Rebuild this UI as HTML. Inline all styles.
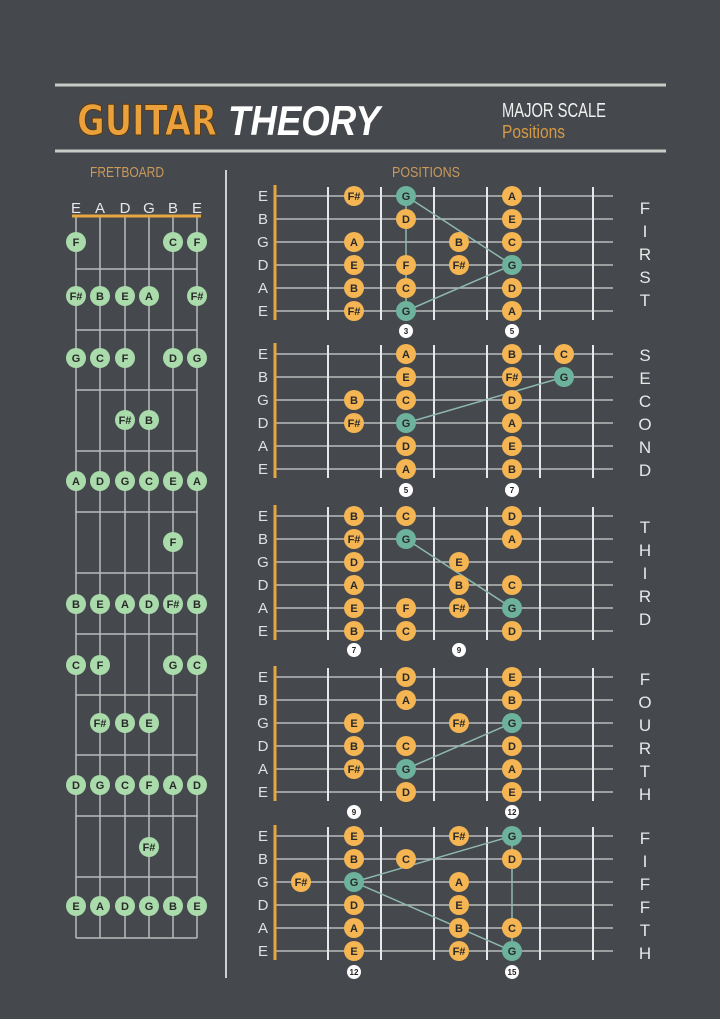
<!DOCTYPE html>
<html><head><meta charset="utf-8"><style>
html,body{margin:0;padding:0;background:#45484d;}
svg{display:block}
text{font-family:"Liberation Sans",sans-serif}
.o{fill:#f4b552}
.g{fill:#6db29c}
.lg{fill:#a9dbab}
.n{font-size:11px;font-weight:bold;fill:#2a2a2a;text-anchor:middle}
.s{stroke:#b9bcbc;stroke-width:1.5}
.f{stroke:#e8e8e8;stroke-width:2}
.lbl{font-size:15px;fill:#e0e0e0;text-anchor:middle}
.w{font-size:15px;fill:#e8e8e8;text-anchor:middle}
.rw{font-size:17px;fill:#e8e8e8;text-anchor:middle}
.ln{stroke:#8fb8ae;stroke-width:1.5}
.fn{fill:#fff}
.fnt{font-size:8px;font-weight:bold;fill:#222;text-anchor:middle}
</style></head><body>
<svg width="720" height="1019" viewBox="0 0 720 1019" xmlns="http://www.w3.org/2000/svg">
<defs>
<g id="grid">
  <text class="lbl" x="263" y="201">E</text>
  <text class="lbl" x="263" y="224">B</text>
  <text class="lbl" x="263" y="247">G</text>
  <text class="lbl" x="263" y="270">D</text>
  <text class="lbl" x="263" y="293">A</text>
  <text class="lbl" x="263" y="316">E</text>
  <line class="s" x1="275" y1="196" x2="613" y2="196"/>
  <line class="s" x1="275" y1="219" x2="613" y2="219"/>
  <line class="s" x1="275" y1="242" x2="613" y2="242"/>
  <line class="s" x1="275" y1="265" x2="613" y2="265"/>
  <line class="s" x1="275" y1="288" x2="613" y2="288"/>
  <line class="s" x1="275" y1="311" x2="613" y2="311"/>
  <line class="f" x1="328" y1="187" x2="328" y2="320"/>
  <line class="f" x1="381" y1="187" x2="381" y2="320"/>
  <line class="f" x1="434" y1="187" x2="434" y2="320"/>
  <line class="f" x1="487" y1="187" x2="487" y2="320"/>
  <line class="f" x1="540" y1="187" x2="540" y2="320"/>
  <line class="f" x1="593" y1="187" x2="593" y2="320"/>
  <line x1="275" y1="185" x2="275" y2="320" stroke="#e8a73e" stroke-width="3"/>
</g>
</defs>

<line x1="55" y1="85" x2="666" y2="85" stroke="#c8ccc6" stroke-width="3"/>
<line x1="55" y1="151" x2="666" y2="151" stroke="#c8ccc6" stroke-width="3"/>
<text x="77" y="135" font-size="42" font-weight="bold" fill="#eba13b" stroke="#5a3a10" stroke-width="1" style="font-family:'DejaVu Sans Condensed','Liberation Sans Narrow',sans-serif" textLength="140" lengthAdjust="spacingAndGlyphs">GUITAR</text>
<text x="228" y="135" font-size="42" font-weight="bold" font-style="italic" fill="#ffffff" textLength="152" lengthAdjust="spacingAndGlyphs">THEORY</text>
<text x="502" y="117" font-size="20" fill="#f0f0f0" textLength="104" lengthAdjust="spacingAndGlyphs">MAJOR SCALE</text>
<text x="502" y="138" font-size="18" fill="#d69a45" textLength="63" lengthAdjust="spacingAndGlyphs">Positions</text>

<text x="127" y="177" font-size="15" fill="#c99a5c" text-anchor="middle" textLength="74" lengthAdjust="spacingAndGlyphs">FRETBOARD</text>
<text x="426" y="177" font-size="15" fill="#c99a5c" text-anchor="middle" textLength="68" lengthAdjust="spacingAndGlyphs">POSITIONS</text>
<line x1="226" y1="170" x2="226" y2="978" stroke="#d0d0d0" stroke-width="2"/>

<g>
<text class="w" x="76" y="213">E</text><text class="w" x="100" y="213">A</text><text class="w" x="125" y="213">D</text><text class="w" x="149" y="213">G</text><text class="w" x="173" y="213">B</text><text class="w" x="197" y="213">E</text>
<g class="s">
<line x1="76" y1="216" x2="76" y2="938"/><line x1="100" y1="216" x2="100" y2="938"/><line x1="125" y1="216" x2="125" y2="938"/><line x1="149" y1="216" x2="149" y2="938"/><line x1="173" y1="216" x2="173" y2="938"/><line x1="197" y1="216" x2="197" y2="938"/>
<line x1="76" y1="269" x2="197" y2="269"/><line x1="76" y1="330" x2="197" y2="330"/><line x1="76" y1="390" x2="197" y2="390"/><line x1="76" y1="451" x2="197" y2="451"/><line x1="76" y1="512" x2="197" y2="512"/><line x1="76" y1="573" x2="197" y2="573"/><line x1="76" y1="634" x2="197" y2="634"/><line x1="76" y1="695" x2="197" y2="695"/><line x1="76" y1="755" x2="197" y2="755"/><line x1="76" y1="816" x2="197" y2="816"/><line x1="76" y1="877" x2="197" y2="877"/><line x1="76" y1="938" x2="197" y2="938"/>
</g>
<line x1="72" y1="216" x2="201" y2="216" stroke="#e8a73e" stroke-width="3"/>
</g>
<g>
<circle class="lg" cx="76" cy="242" r="10"/><text class="n" x="76" y="246">F</text>
<circle class="lg" cx="173" cy="242" r="10"/><text class="n" x="173" y="246">C</text>
<circle class="lg" cx="197" cy="242" r="10"/><text class="n" x="197" y="246">F</text>
<circle class="lg" cx="76" cy="296" r="10"/><text class="n" x="76" y="300">F#</text>
<circle class="lg" cx="100" cy="296" r="10"/><text class="n" x="100" y="300">B</text>
<circle class="lg" cx="125" cy="296" r="10"/><text class="n" x="125" y="300">E</text>
<circle class="lg" cx="149" cy="296" r="10"/><text class="n" x="149" y="300">A</text>
<circle class="lg" cx="197" cy="296" r="10"/><text class="n" x="197" y="300">F#</text>
<circle class="lg" cx="76" cy="358" r="10"/><text class="n" x="76" y="362">G</text>
<circle class="lg" cx="100" cy="358" r="10"/><text class="n" x="100" y="362">C</text>
<circle class="lg" cx="125" cy="358" r="10"/><text class="n" x="125" y="362">F</text>
<circle class="lg" cx="173" cy="358" r="10"/><text class="n" x="173" y="362">D</text>
<circle class="lg" cx="197" cy="358" r="10"/><text class="n" x="197" y="362">G</text>
<circle class="lg" cx="125" cy="420" r="10"/><text class="n" x="125" y="424">F#</text>
<circle class="lg" cx="149" cy="420" r="10"/><text class="n" x="149" y="424">B</text>
<circle class="lg" cx="76" cy="481" r="10"/><text class="n" x="76" y="485">A</text>
<circle class="lg" cx="100" cy="481" r="10"/><text class="n" x="100" y="485">D</text>
<circle class="lg" cx="125" cy="481" r="10"/><text class="n" x="125" y="485">G</text>
<circle class="lg" cx="149" cy="481" r="10"/><text class="n" x="149" y="485">C</text>
<circle class="lg" cx="173" cy="481" r="10"/><text class="n" x="173" y="485">E</text>
<circle class="lg" cx="197" cy="481" r="10"/><text class="n" x="197" y="485">A</text>
<circle class="lg" cx="173" cy="542" r="10"/><text class="n" x="173" y="546">F</text>
<circle class="lg" cx="76" cy="604" r="10"/><text class="n" x="76" y="608">B</text>
<circle class="lg" cx="100" cy="604" r="10"/><text class="n" x="100" y="608">E</text>
<circle class="lg" cx="125" cy="604" r="10"/><text class="n" x="125" y="608">A</text>
<circle class="lg" cx="149" cy="604" r="10"/><text class="n" x="149" y="608">D</text>
<circle class="lg" cx="173" cy="604" r="10"/><text class="n" x="173" y="608">F#</text>
<circle class="lg" cx="197" cy="604" r="10"/><text class="n" x="197" y="608">B</text>
<circle class="lg" cx="76" cy="665" r="10"/><text class="n" x="76" y="669">C</text>
<circle class="lg" cx="100" cy="665" r="10"/><text class="n" x="100" y="669">F</text>
<circle class="lg" cx="173" cy="665" r="10"/><text class="n" x="173" y="669">G</text>
<circle class="lg" cx="197" cy="665" r="10"/><text class="n" x="197" y="669">C</text>
<circle class="lg" cx="100" cy="723" r="10"/><text class="n" x="100" y="727">F#</text>
<circle class="lg" cx="125" cy="723" r="10"/><text class="n" x="125" y="727">B</text>
<circle class="lg" cx="149" cy="723" r="10"/><text class="n" x="149" y="727">E</text>
<circle class="lg" cx="76" cy="785" r="10"/><text class="n" x="76" y="789">D</text>
<circle class="lg" cx="100" cy="785" r="10"/><text class="n" x="100" y="789">G</text>
<circle class="lg" cx="125" cy="785" r="10"/><text class="n" x="125" y="789">C</text>
<circle class="lg" cx="149" cy="785" r="10"/><text class="n" x="149" y="789">F</text>
<circle class="lg" cx="173" cy="785" r="10"/><text class="n" x="173" y="789">A</text>
<circle class="lg" cx="197" cy="785" r="10"/><text class="n" x="197" y="789">D</text>
<circle class="lg" cx="149" cy="847" r="10"/><text class="n" x="149" y="851">F#</text>
<circle class="lg" cx="76" cy="906" r="10"/><text class="n" x="76" y="910">E</text>
<circle class="lg" cx="100" cy="906" r="10"/><text class="n" x="100" y="910">A</text>
<circle class="lg" cx="125" cy="906" r="10"/><text class="n" x="125" y="910">D</text>
<circle class="lg" cx="149" cy="906" r="10"/><text class="n" x="149" y="910">G</text>
<circle class="lg" cx="173" cy="906" r="10"/><text class="n" x="173" y="910">B</text>
<circle class="lg" cx="197" cy="906" r="10"/><text class="n" x="197" y="910">E</text>
</g>

<g>
<use href="#grid"/>
<line class="ln" x1="406" y1="196" x2="512" y2="265"/><line class="ln" x1="512" y1="265" x2="406" y2="311"/><line class="ln" x1="406" y1="196" x2="406" y2="311"/>
<circle class="o" cx="354" cy="196" r="10"/><text class="n" x="354" y="200">F#</text>
<circle class="g" cx="406" cy="196" r="10"/><text class="n" x="406" y="200">G</text>
<circle class="o" cx="512" cy="196" r="10"/><text class="n" x="512" y="200">A</text>
<circle class="o" cx="406" cy="219" r="10"/><text class="n" x="406" y="223">D</text>
<circle class="o" cx="512" cy="219" r="10"/><text class="n" x="512" y="223">E</text>
<circle class="o" cx="354" cy="242" r="10"/><text class="n" x="354" y="246">A</text>
<circle class="o" cx="459" cy="242" r="10"/><text class="n" x="459" y="246">B</text>
<circle class="o" cx="512" cy="242" r="10"/><text class="n" x="512" y="246">C</text>
<circle class="o" cx="354" cy="265" r="10"/><text class="n" x="354" y="269">E</text>
<circle class="o" cx="406" cy="265" r="10"/><text class="n" x="406" y="269">F</text>
<circle class="o" cx="459" cy="265" r="10"/><text class="n" x="459" y="269">F#</text>
<circle class="g" cx="512" cy="265" r="10"/><text class="n" x="512" y="269">G</text>
<circle class="o" cx="354" cy="288" r="10"/><text class="n" x="354" y="292">B</text>
<circle class="o" cx="406" cy="288" r="10"/><text class="n" x="406" y="292">C</text>
<circle class="o" cx="512" cy="288" r="10"/><text class="n" x="512" y="292">D</text>
<circle class="o" cx="354" cy="311" r="10"/><text class="n" x="354" y="315">F#</text>
<circle class="g" cx="406" cy="311" r="10"/><text class="n" x="406" y="315">G</text>
<circle class="o" cx="512" cy="311" r="10"/><text class="n" x="512" y="315">A</text>
<circle class="fn" cx="406" cy="331" r="7"/><text class="fnt" x="406" y="334">3</text>
<circle class="fn" cx="512" cy="331" r="7"/><text class="fnt" x="512" y="334">5</text>
<text class="rw" x="645" y="214">F</text><text class="rw" x="645" y="237">I</text><text class="rw" x="645" y="260">R</text><text class="rw" x="645" y="283">S</text><text class="rw" x="645" y="306">T</text>
</g>

<g transform="translate(0,158)">
<use href="#grid"/>
<line class="ln" x1="406" y1="265" x2="564" y2="219"/>
<circle class="o" cx="406" cy="196" r="10"/><text class="n" x="406" y="200">A</text>
<circle class="o" cx="512" cy="196" r="10"/><text class="n" x="512" y="200">B</text>
<circle class="o" cx="564" cy="196" r="10"/><text class="n" x="564" y="200">C</text>
<circle class="o" cx="406" cy="219" r="10"/><text class="n" x="406" y="223">E</text>
<circle class="o" cx="512" cy="219" r="10"/><text class="n" x="512" y="223">F#</text>
<circle class="g" cx="564" cy="219" r="10"/><text class="n" x="564" y="223">G</text>
<circle class="o" cx="354" cy="242" r="10"/><text class="n" x="354" y="246">B</text>
<circle class="o" cx="406" cy="242" r="10"/><text class="n" x="406" y="246">C</text>
<circle class="o" cx="512" cy="242" r="10"/><text class="n" x="512" y="246">D</text>
<circle class="o" cx="354" cy="265" r="10"/><text class="n" x="354" y="269">F#</text>
<circle class="g" cx="406" cy="265" r="10"/><text class="n" x="406" y="269">G</text>
<circle class="o" cx="512" cy="265" r="10"/><text class="n" x="512" y="269">A</text>
<circle class="o" cx="406" cy="288" r="10"/><text class="n" x="406" y="292">D</text>
<circle class="o" cx="512" cy="288" r="10"/><text class="n" x="512" y="292">E</text>
<circle class="o" cx="406" cy="311" r="10"/><text class="n" x="406" y="315">A</text>
<circle class="o" cx="512" cy="311" r="10"/><text class="n" x="512" y="315">B</text>
<circle class="fn" cx="406" cy="332" r="7"/><text class="fnt" x="406" y="335">5</text>
<circle class="fn" cx="512" cy="332" r="7"/><text class="fnt" x="512" y="335">7</text>
<text class="rw" x="645" y="203">S</text><text class="rw" x="645" y="226">E</text><text class="rw" x="645" y="249">C</text><text class="rw" x="645" y="272">O</text><text class="rw" x="645" y="295">N</text><text class="rw" x="645" y="318">D</text>
</g>

<g transform="translate(0,320)">
<use href="#grid"/>
<line class="ln" x1="406" y1="219" x2="512" y2="288"/>
<circle class="o" cx="354" cy="196" r="10"/><text class="n" x="354" y="200">B</text>
<circle class="o" cx="406" cy="196" r="10"/><text class="n" x="406" y="200">C</text>
<circle class="o" cx="512" cy="196" r="10"/><text class="n" x="512" y="200">D</text>
<circle class="o" cx="354" cy="219" r="10"/><text class="n" x="354" y="223">F#</text>
<circle class="g" cx="406" cy="219" r="10"/><text class="n" x="406" y="223">G</text>
<circle class="o" cx="512" cy="219" r="10"/><text class="n" x="512" y="223">A</text>
<circle class="o" cx="354" cy="242" r="10"/><text class="n" x="354" y="246">D</text>
<circle class="o" cx="459" cy="242" r="10"/><text class="n" x="459" y="246">E</text>
<circle class="o" cx="354" cy="265" r="10"/><text class="n" x="354" y="269">A</text>
<circle class="o" cx="459" cy="265" r="10"/><text class="n" x="459" y="269">B</text>
<circle class="o" cx="512" cy="265" r="10"/><text class="n" x="512" y="269">C</text>
<circle class="o" cx="354" cy="288" r="10"/><text class="n" x="354" y="292">E</text>
<circle class="o" cx="406" cy="288" r="10"/><text class="n" x="406" y="292">F</text>
<circle class="o" cx="459" cy="288" r="10"/><text class="n" x="459" y="292">F#</text>
<circle class="g" cx="512" cy="288" r="10"/><text class="n" x="512" y="292">G</text>
<circle class="o" cx="354" cy="311" r="10"/><text class="n" x="354" y="315">B</text>
<circle class="o" cx="406" cy="311" r="10"/><text class="n" x="406" y="315">C</text>
<circle class="o" cx="512" cy="311" r="10"/><text class="n" x="512" y="315">D</text>
<circle class="fn" cx="354" cy="330" r="7"/><text class="fnt" x="354" y="333">7</text>
<circle class="fn" cx="459" cy="330" r="7"/><text class="fnt" x="459" y="333">9</text>
<text class="rw" x="645" y="213">T</text><text class="rw" x="645" y="236">H</text><text class="rw" x="645" y="259">I</text><text class="rw" x="645" y="282">R</text><text class="rw" x="645" y="305">D</text>
</g>

<g transform="translate(0,481)">
<use href="#grid"/>
<line class="ln" x1="406" y1="288" x2="512" y2="242"/>
<circle class="o" cx="406" cy="196" r="10"/><text class="n" x="406" y="200">D</text>
<circle class="o" cx="512" cy="196" r="10"/><text class="n" x="512" y="200">E</text>
<circle class="o" cx="406" cy="219" r="10"/><text class="n" x="406" y="223">A</text>
<circle class="o" cx="512" cy="219" r="10"/><text class="n" x="512" y="223">B</text>
<circle class="o" cx="354" cy="242" r="10"/><text class="n" x="354" y="246">E</text>
<circle class="o" cx="459" cy="242" r="10"/><text class="n" x="459" y="246">F#</text>
<circle class="g" cx="512" cy="242" r="10"/><text class="n" x="512" y="246">G</text>
<circle class="o" cx="354" cy="265" r="10"/><text class="n" x="354" y="269">B</text>
<circle class="o" cx="406" cy="265" r="10"/><text class="n" x="406" y="269">C</text>
<circle class="o" cx="512" cy="265" r="10"/><text class="n" x="512" y="269">D</text>
<circle class="o" cx="354" cy="288" r="10"/><text class="n" x="354" y="292">F#</text>
<circle class="g" cx="406" cy="288" r="10"/><text class="n" x="406" y="292">G</text>
<circle class="o" cx="512" cy="288" r="10"/><text class="n" x="512" y="292">A</text>
<circle class="o" cx="406" cy="311" r="10"/><text class="n" x="406" y="315">D</text>
<circle class="o" cx="512" cy="311" r="10"/><text class="n" x="512" y="315">E</text>
<circle class="fn" cx="354" cy="331" r="7"/><text class="fnt" x="354" y="334">9</text>
<circle class="fn" cx="512" cy="331" r="7"/><text class="fnt" x="512" y="334">12</text>
<text class="rw" x="645" y="204">F</text><text class="rw" x="645" y="227">O</text><text class="rw" x="645" y="250">U</text><text class="rw" x="645" y="273">R</text><text class="rw" x="645" y="296">T</text><text class="rw" x="645" y="319">H</text>
</g>

<g transform="translate(0,640)">
<use href="#grid"/>
<line class="ln" x1="354" y1="242" x2="512" y2="196"/><line class="ln" x1="354" y1="242" x2="512" y2="311"/><line class="ln" x1="512" y1="196" x2="512" y2="311"/>
<circle class="o" cx="354" cy="196" r="10"/><text class="n" x="354" y="200">E</text>
<circle class="o" cx="459" cy="196" r="10"/><text class="n" x="459" y="200">F#</text>
<circle class="g" cx="512" cy="196" r="10"/><text class="n" x="512" y="200">G</text>
<circle class="o" cx="354" cy="219" r="10"/><text class="n" x="354" y="223">B</text>
<circle class="o" cx="406" cy="219" r="10"/><text class="n" x="406" y="223">C</text>
<circle class="o" cx="512" cy="219" r="10"/><text class="n" x="512" y="223">D</text>
<circle class="o" cx="301" cy="242" r="10"/><text class="n" x="301" y="246">F#</text>
<circle class="g" cx="354" cy="242" r="10"/><text class="n" x="354" y="246">G</text>
<circle class="o" cx="459" cy="242" r="10"/><text class="n" x="459" y="246">A</text>
<circle class="o" cx="354" cy="265" r="10"/><text class="n" x="354" y="269">D</text>
<circle class="o" cx="459" cy="265" r="10"/><text class="n" x="459" y="269">E</text>
<circle class="o" cx="354" cy="288" r="10"/><text class="n" x="354" y="292">A</text>
<circle class="o" cx="459" cy="288" r="10"/><text class="n" x="459" y="292">B</text>
<circle class="o" cx="512" cy="288" r="10"/><text class="n" x="512" y="292">C</text>
<circle class="o" cx="354" cy="311" r="10"/><text class="n" x="354" y="315">E</text>
<circle class="o" cx="459" cy="311" r="10"/><text class="n" x="459" y="315">F#</text>
<circle class="g" cx="512" cy="311" r="10"/><text class="n" x="512" y="315">G</text>
<circle class="fn" cx="354" cy="332" r="7"/><text class="fnt" x="354" y="335">12</text>
<circle class="fn" cx="512" cy="332" r="7"/><text class="fnt" x="512" y="335">15</text>
<text class="rw" x="645" y="204">F</text><text class="rw" x="645" y="227">I</text><text class="rw" x="645" y="250">F</text><text class="rw" x="645" y="273">F</text><text class="rw" x="645" y="296">T</text><text class="rw" x="645" y="319">H</text>
</g>
</svg>
</body></html>
